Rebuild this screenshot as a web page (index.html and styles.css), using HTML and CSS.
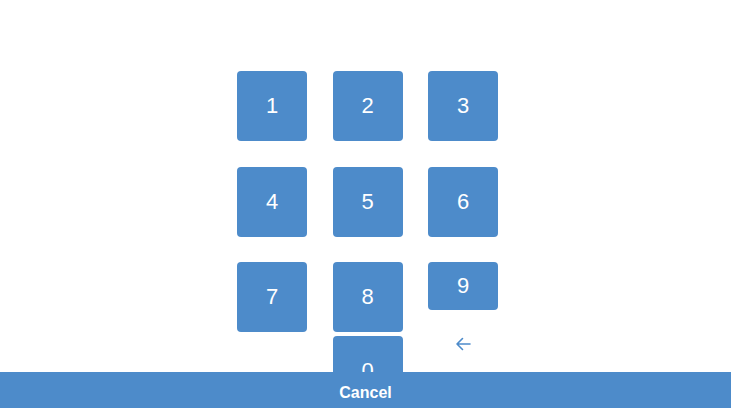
FILE: index.html
```html
<!DOCTYPE html>
<html lang="en">
<head>
    <meta charset="UTF-8">
    <meta name="viewport" content="width=device-width, initial-scale=1.0">
    <title>Keypad</title>
    <link rel="stylesheet" href="styles.css">
</head>
<body>
    <div id="pad">
        <div class="keys">
            <button class="key">1</button>
            <button class="key">2</button>
            <button class="key">3</button>
            <button class="key">4</button>
            <button class="key">5</button>
            <button class="key">6</button>
            <button class="key">7</button>
            <button class="key">8</button>
            <button class="key short">9</button>
        </div>
        <div class="keys last">
            <span></span>
            <button class="key">0</button>
            <button class="back" aria-label="Delete">
                <svg width="18" height="14" viewBox="0 0 18 14">
                    <path d="M16 7H3M8.5 1.5L3 7l5.5 5.5" fill="none" stroke="#4d8bca" stroke-width="1.6" stroke-linecap="round" stroke-linejoin="round"/>
                </svg>
            </button>
        </div>
    </div>

    <div id="cancel">Cancel</div>
</body>
</html>
```

FILE: styles.css
```css
body {
    font-family: "Liberation Sans", Arial, sans-serif;
    margin: 0;
    padding: 0;
    background-color: #fff;
    overflow: hidden;
}

#pad {
    padding: 71px 0 0 4px;
    display: flex;
    flex-direction: column;
    align-items: center;
}

.keys {
    display: grid;
    grid-template-columns: 70px 70px 70px;
    grid-auto-rows: 70px;
    column-gap: 25.5px;
    row-gap: 25.5px;
    align-items: start;
}

.keys.last {
    margin-top: 4px;
}

.key {
    width: 70px;
    height: 70px;
    background-color: #4d8bca;
    color: #fff;
    border: none;
    border-radius: 4px;
    font-family: "Liberation Sans", Arial, sans-serif;
    font-size: 22px;
    font-weight: normal;
    padding: 0;
    cursor: pointer;
}

.key.short {
    height: 48px;
}

.back {
    height: 14px;
    margin-top: 1px;
    background: none;
    border: none;
    padding: 0;
    display: flex;
    align-items: center;
    justify-content: center;
    cursor: pointer;
}

#cancel {
    position: fixed;
    left: 0;
    right: 0;
    bottom: 0;
    height: 36px;
    line-height: 41px;
    background-color: #4d8bca;
    color: #fff;
    text-align: center;
    font-size: 16px;
    font-weight: bold;
}
```
